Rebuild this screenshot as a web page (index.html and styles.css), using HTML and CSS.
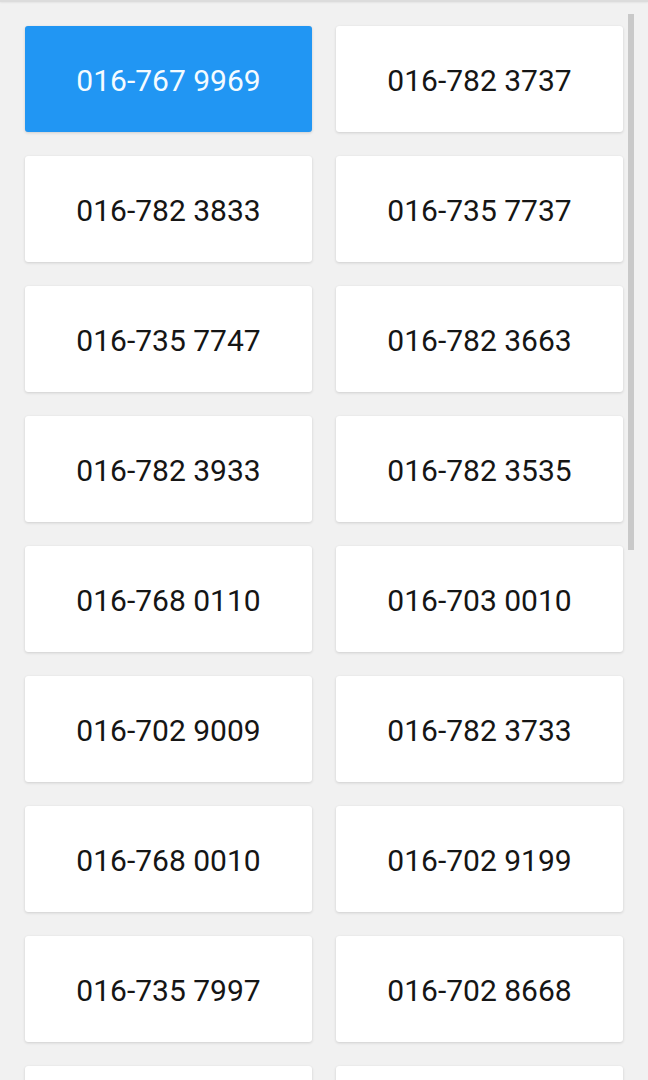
FILE: index.html
```html
<!DOCTYPE html>
<html>
<head>
<meta charset="utf-8">
<link rel="stylesheet" href="styles.css">
</head>
<body>
<div class="topbar"></div>
<div class="list">
  <div class="card selected">016-767 9969</div>
  <div class="card">016-782 3737</div>
  <div class="card">016-782 3833</div>
  <div class="card">016-735 7737</div>
  <div class="card">016-735 7747</div>
  <div class="card">016-782 3663</div>
  <div class="card">016-782 3933</div>
  <div class="card">016-782 3535</div>
  <div class="card">016-768 0110</div>
  <div class="card">016-703 0010</div>
  <div class="card">016-702 9009</div>
  <div class="card">016-782 3733</div>
  <div class="card">016-768 0010</div>
  <div class="card">016-702 9199</div>
  <div class="card">016-735 7997</div>
  <div class="card">016-702 8668</div>
  <div class="card"></div>
  <div class="card"></div>
</div>
<div class="scrollbar"></div>
</body>
</html>
```
FILE: styles.css
```css
html, body {
  margin: 0;
  padding: 0;
  background: #f1f1f1;
  height: 1080px;
  overflow: hidden;
}
body {
  font-family: Roboto, "Noto Sans", sans-serif;
  position: relative;
}
.topbar {
  height: 2px;
  background: #dcdcdc;
  box-shadow: 0 1px 2px rgba(0,0,0,0.06);
}
.list {
  display: grid;
  grid-template-columns: 287px 287px;
  column-gap: 24px;
  row-gap: 24px;
  padding: 24px 0 0 25px;
}
.card {
  height: 106px;
  background: #ffffff;
  border-radius: 3px;
  box-shadow: 0 1px 3px rgba(0,0,0,0.14), 0 0 1px rgba(0,0,0,0.06);
  display: flex;
  align-items: center;
  justify-content: center;
  font-size: 30px;
  color: #151515;
  padding-top: 2px;
  box-sizing: border-box;
}
.card.selected {
  background: #2196f3;
  color: #f4fbff;
}
.scrollbar {
  position: absolute;
  left: 628px;
  top: 14px;
  width: 6px;
  height: 536px;
  background: #c9c9c9;
}
```
